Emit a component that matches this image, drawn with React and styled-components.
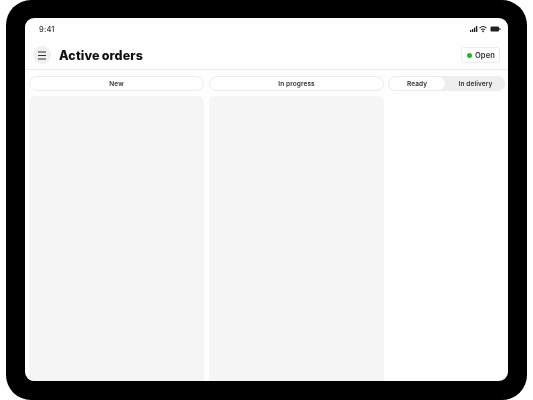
import React from "react";
import styled, { createGlobalStyle } from "styled-components";

const Global = createGlobalStyle`
  html, body { margin: 0; padding: 0; background: #fff; }
  * { box-sizing: border-box; }
  body { font-family: Inter, "Liberation Sans", sans-serif; }
`;
const Page = styled.div`
  width: 533px; height: 400px; padding: 0 6px; overflow: hidden;
`;
const Device = styled.div`
  width: 521px; height: 400px; background: #000; border-radius: 25px;
  padding: 18px 19px 19px;
`;
const Screen = styled.div`
  width: 483px; height: 363px; background: #fff; border-radius: 9px; overflow: hidden;
  display: flex; flex-direction: column; will-change: opacity; opacity: 0.999;
`;
const StatusBar = styled.div`
  height: 22px; padding: 0 7px 0 14px; flex: none;
  display: flex; align-items: center; justify-content: space-between;
  font-size: 7.5px; font-weight: 500; color: #333; letter-spacing: 0.2px;
`;
const Header = styled.div`
  height: 30px; flex: none; padding: 0 8px 0 8px; border-bottom: 1px solid #ececec;
  display: flex; align-items: center; justify-content: space-between;
`;
const TitleGroup = styled.div`display: flex; align-items: center; gap: 8px; margin-top: 1px;`;
const MenuButton = styled.div`
  width: 18px; height: 18px; border-radius: 50%; background: #f0f0f0;
  display: flex; align-items: center; justify-content: center;
`;
const Title = styled.div`
  font-size: 12.5px; font-weight: 800; color: #111; letter-spacing: 0.12px; word-spacing: -0.8px;
`;
const OpenBadge = styled.div`
  height: 16px; width: 39px; border: 1px solid #ececec; border-radius: 3px; padding-left: 1px;
  display: flex; align-items: center; justify-content: center; gap: 3px;
  font-size: 7.5px; font-weight: 600; color: #333; margin-top: 1px; letter-spacing: 0.15px;
`;
const Dot = styled.span`width: 5px; height: 5px; border-radius: 50%; background: #1cc01c;`;
const Board = styled.div`
  flex: 1; min-height: 0; padding: 6px 4px 0; display: grid;
  grid-template-columns: 175px 175px 116px; column-gap: 5px; grid-template-rows: 15px 1fr; row-gap: 5px;
`;
const ColumnHead = styled.div`
  border: 1px solid #ececec; border-radius: 8px; background: #fff;
  display: flex; align-items: center; justify-content: center;
  font-size: 6.5px; font-weight: 600; color: #333; letter-spacing: 0.1px;
`;
const Tabs = styled.div`
  background: #efefef; border-radius: 8px; display: flex; margin-left: -1px;
  font-size: 6.5px; font-weight: 600; color: #333; letter-spacing: 0.1px;
`;
const Tab = styled.div`
  width: ${p => p.$active ? "58px" : "auto"}; flex: ${p => p.$active ? "none" : 1};
  background: ${p => p.$active ? "#fff" : "transparent"};
  border: ${p => p.$active ? "1px solid #ececec" : "none"};
  border-radius: 8px;
  display: flex; align-items: center; justify-content: center;
`;
const Card = styled.div`
  background: #f6f6f6; border-radius: 6px 6px 0 0;
`;

export default function App() {
  return (
    <>
      <Global />
      <Page>
        <Device>
          <Screen>
            <StatusBar>
              <span>9:41</span>
              <svg width="32" height="8" viewBox="0 0 32 8">
                <g fill="#222">
                  <rect x="1" y="5" width="1.3" height="2" />
                  <rect x="3" y="4" width="1.3" height="3" />
                  <rect x="5" y="2.5" width="1.3" height="4.5" />
                  <rect x="7" y="1" width="1.3" height="6" />
                  <rect x="21.5" y="1.5" width="8.5" height="5" rx="1.2" />
                  <rect x="30.4" y="3" width="1" height="2" />
                </g>
                <path d="M10.5 3.2c2.2-2 5-2 7 0M12 4.8c1.3-1 2.7-1 4 0" fill="none" stroke="#222" strokeWidth="1.1" />
                <circle cx="14" cy="6.3" r="0.9" fill="#222" />
              </svg>
            </StatusBar>
            <Header>
              <TitleGroup>
                <MenuButton>
                  <svg width="10" height="9" viewBox="0 0 10 9">
                    <path d="M1 1h8M1 4.5h8M1 8h8" stroke="#333" strokeWidth="1" />
                  </svg>
                </MenuButton>
                <Title>Active orders</Title>
              </TitleGroup>
              <OpenBadge><Dot />Open</OpenBadge>
            </Header>
            <Board>
              <ColumnHead>New</ColumnHead>
              <ColumnHead>In progress</ColumnHead>
              <Tabs>
                <Tab $active>Ready</Tab>
                <Tab>In delivery</Tab>
              </Tabs>
              <Card />
              <Card />
            </Board>
          </Screen>
        </Device>
      </Page>
    </>
  );
}
